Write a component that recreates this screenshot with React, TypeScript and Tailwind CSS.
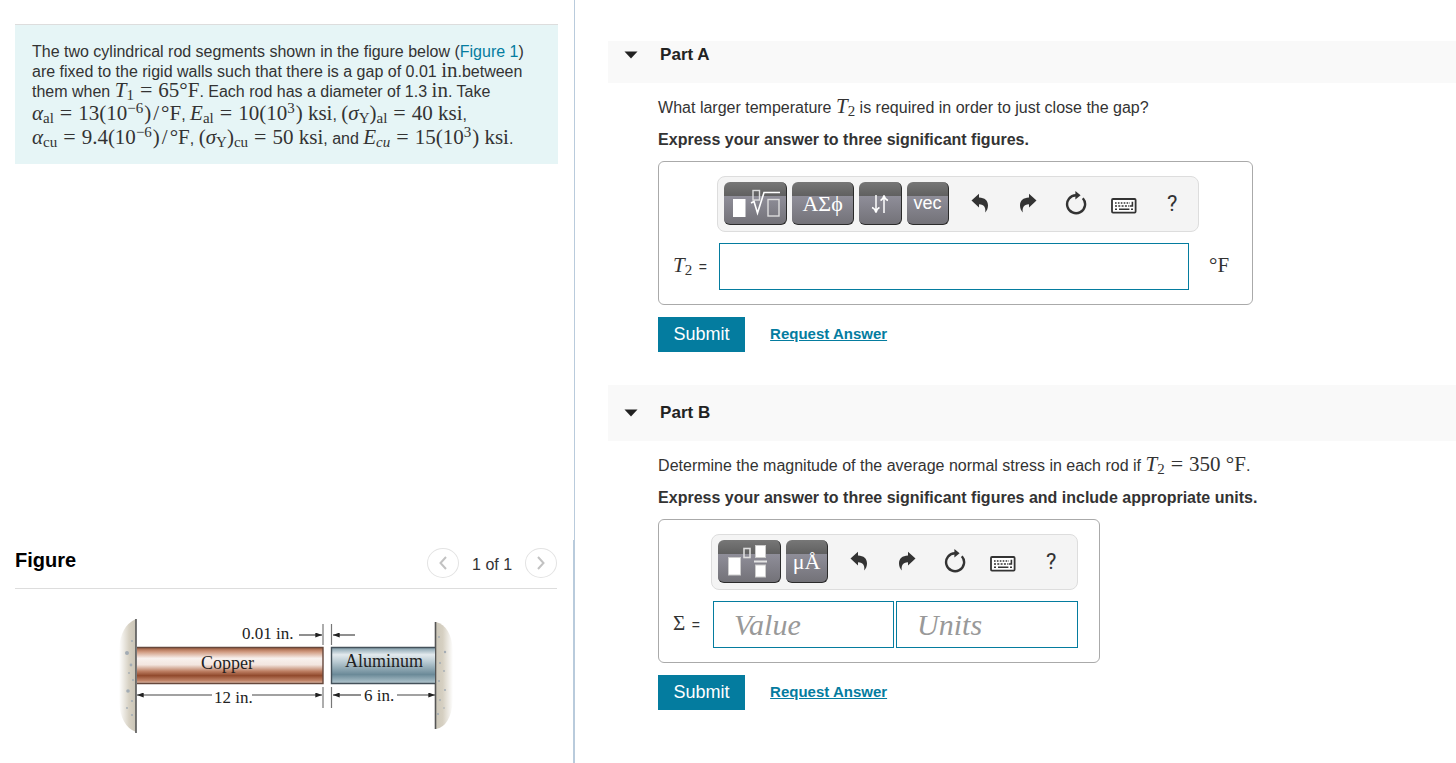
import type { ReactNode } from 'react'

const serif = "font-['Liberation_Serif','Times_New_Roman',serif]"

// Inline formula in the upright serif face
function M({ children }: { children: ReactNode }) {
  return (
    <span className="font-['Liberation_Serif','Times_New_Roman',serif] text-[21px] leading-0 whitespace-nowrap">
      {children}
    </span>
  )
}

function Sub({ children }: { children: ReactNode }) {
  return <sub className="-bottom-[3px] text-[15px]">{children}</sub>
}

function Sup({ children }: { children: ReactNode }) {
  return <sup className="mr-px text-[15px]">{children}</sup>
}

function Eq() {
  return <span className="mx-1.5 text-[22px] leading-0">=</span>
}

function Slash() {
  return <span className="mx-0.5">/</span>
}

function UndoIcon({ flip = false }: { flip?: boolean }) {
  return (
    <svg width="18" height="20" viewBox="0 0 18 20" className={flip ? '-scale-x-100' : ''} fill="#333">
      <path d="M0.5 7.5 L8 0.8 V4.6 C13.8 4.8 17 7.8 17 12.4 C17 15.4 15.8 17.6 14.2 19.4 C14.9 15 13.6 11.6 8 11.2 V14.4 Z" />
    </svg>
  )
}

function ResetIcon() {
  return (
    <svg width="22" height="24" viewBox="0 0 22 24">
      <path d="M11 4.2 A9 9 0 1 0 17.8 7.2" fill="none" stroke="#333" strokeWidth="2.4" />
      <path d="M10.4 0 L15.6 4.2 L10.4 8.6 Z" fill="#333" />
    </svg>
  )
}

function KeyboardIcon() {
  return (
    <svg width="26" height="16" viewBox="0 0 26 16">
      <rect x="1" y="1" width="23.6" height="13.6" rx="1" fill="#fff" stroke="#333" strokeWidth="1.8" />
      <path d="M4 5 H19" stroke="#333" strokeWidth="1.6" strokeDasharray="1.6 1.3" />
      <path d="M4 8 H18" stroke="#333" strokeWidth="1.6" strokeDasharray="2 1.3" />
      <path d="M21.4 3.8 V8 H18.6" fill="none" stroke="#333" strokeWidth="1.6" />
      <path d="M4 11.2 H6 M8 11.2 H18.4 M20 11.2 H22" stroke="#333" strokeWidth="1.6" />
    </svg>
  )
}

function RootIcon() {
  return (
    <svg width="50" height="30" viewBox="0 0 50 30" fill="none">
      <rect x="3" y="10" width="12.5" height="18" fill="#fff" />
      <rect x="23" y="1.5" width="6.5" height="9.5" stroke="#ddd" strokeWidth="1.4" />
      <path d="M21 14 L24 12.5 L27.5 24 L34 3.5 H50" stroke="#fff" strokeWidth="1.6" />
      <rect x="38" y="10.5" width="11" height="16.5" stroke="#ddd" strokeWidth="1.4" />
    </svg>
  )
}

function FractionIcon() {
  return (
    <svg width="44" height="34" viewBox="2 1 44 34" fill="none">
      <rect x="3.5" y="13.5" width="12" height="17.5" fill="#fff" stroke="#ccc" />
      <rect x="19" y="4.5" width="6" height="9" stroke="#ddd" strokeWidth="1.6" />
      <rect x="30.5" y="1.5" width="10" height="12" fill="#fff" stroke="#ccc" />
      <path d="M29 17.5 H42" stroke="#e5e5e5" strokeWidth="2" />
      <rect x="30.5" y="21" width="10" height="12" fill="#fff" stroke="#ccc" />
    </svg>
  )
}

function ArrowsIcon() {
  return (
    <svg width="18" height="20" viewBox="0 0 18 20" fill="none" stroke="#fff" strokeWidth="1.5">
      <path d="M5 1 V18 M1 13.5 Q4 14.5 5 18.5 Q6 14.5 8.5 13.5" />
      <path d="M13 19 V2 M9.5 6.5 Q12 5.5 13 1.5 Q14 5.5 17 6.5" />
    </svg>
  )
}

const darkBtn =
  'flex h-[43px] items-center justify-center rounded-md border-r border-b border-[#2b2b2b] bg-[linear-gradient(to_bottom,#777_0px,#606060_14px,#8f8e99_14px,#727177_43px)] pt-0.5 text-white'
const iconBtn = 'flex h-[43px] w-12 items-center justify-center text-[#333]'

function HistoryTools() {
  return (
    <div className="ml-0.5 flex">
      <button aria-label="undo" className={iconBtn}><UndoIcon /></button>
      <button aria-label="redo" className={iconBtn}><UndoIcon flip /></button>
      <button aria-label="reset" className={iconBtn}><ResetIcon /></button>
      <button aria-label="keyboard shortcuts" className={`${iconBtn} pt-1.5`}><KeyboardIcon /></button>
      <button aria-label="help" className={`${iconBtn} text-[22px] font-['Roboto',sans-serif]`}>?</button>
    </div>
  )
}

function Part({ title, first = false, children }: { title: string; first?: boolean; children: ReactNode }) {
  return (
    <section>
      <h2 className={`flex items-center bg-[#f9f9f9] pl-4 ${first ? 'pt-1 pb-[18px]' : 'py-[18px]'}`}>
        <button className="flex items-center text-[17px] leading-5 font-bold text-[#222]">
          <svg width="14" height="8" viewBox="0 0 14 8" className="mr-[22px]">
            <path d="M0.5 0.5 H13.5 L7 7.5 Z" fill="#222" />
          </svg>
          {title}
        </button>
      </h2>
      <div className="pt-[13px] pr-6 pb-[33px] pl-[50px]">{children}</div>
    </section>
  )
}

function Actions() {
  return (
    <div className="mt-3 flex items-center gap-[25px]">
      <button className="h-[35px] w-[87px] bg-[#047c9f] text-[18px] text-white">Submit</button>
      <a href="#request" className="text-[15px] font-bold text-[#047c9f] underline">Request Answer</a>
    </div>
  )
}

function RodFigure() {
  return (
    <svg width="340" height="126" viewBox="115 612 340 126" className="ml-[115px]" role="img" aria-label="Rods between rigid walls">
      <defs>
        <linearGradient id="copper" x1="0" y1="0" x2="0" y2="1">
          <stop offset="0" stopColor="#9c5a3c" />
          <stop offset="0.12" stopColor="#d09a80" />
          <stop offset="0.3" stopColor="#f8f1ee" />
          <stop offset="0.48" stopColor="#f3e6e0" />
          <stop offset="0.66" stopColor="#bd7f63" />
          <stop offset="0.78" stopColor="#914a2d" />
          <stop offset="0.92" stopColor="#c08468" />
          <stop offset="1" stopColor="#e3c2b2" />
        </linearGradient>
        <linearGradient id="aluminum" x1="0" y1="0" x2="0" y2="1">
          <stop offset="0" stopColor="#7f9ba8" />
          <stop offset="0.2" stopColor="#e3eaee" />
          <stop offset="0.4" stopColor="#b9cad2" />
          <stop offset="0.75" stopColor="#6b8a98" />
          <stop offset="1" stopColor="#b4c8d0" />
        </linearGradient>
        <linearGradient id="wallLeft">
          <stop offset="0" stopColor="#d6d0c2" stopOpacity="0" />
          <stop offset="0.6" stopColor="#d6d0c2" />
          <stop offset="1" stopColor="#c9c4b6" />
        </linearGradient>
        <linearGradient id="wallRight">
          <stop offset="0" stopColor="#cdc8ba" />
          <stop offset="0.4" stopColor="#d6d0c2" />
          <stop offset="1" stopColor="#d6d0c2" stopOpacity="0" />
        </linearGradient>
        <marker id="tip" viewBox="0 0 8 6" refX="8" refY="3" markerWidth="7" markerHeight="5" markerUnits="userSpaceOnUse" orient="auto-start-reverse">
          <path d="M0 0 L8 3 L0 6 Z" fill="#222" />
        </marker>
      </defs>

      {/* walls */}
      <path d="M136 619 Q120 626 119 650 V700 Q120 726 136 732 Z" fill="url(#wallLeft)" />
      <path d="M436 622 Q451 626 453 650 V700 Q451 726 436 729 Z" fill="url(#wallRight)" />
      <g fill="#a3acb4">
        <circle cx="127" cy="653" r="2" />
        <circle cx="132" cy="641" r="1" />
        <circle cx="131" cy="665" r="1.4" />
        <circle cx="128" cy="691" r="1.8" />
        <circle cx="133" cy="680" r="1" />
        <circle cx="129" cy="673" r="0.9" />
        <circle cx="132" cy="701" r="1.1" />
        <circle cx="127" cy="708" r="0.9" />
        <circle cx="132" cy="715" r="1.1" />
        <circle cx="439" cy="637" r="0.9" />
        <circle cx="445" cy="652" r="1.2" />
        <circle cx="440" cy="663" r="1" />
        <circle cx="444" cy="671" r="0.9" />
        <circle cx="439" cy="681" r="1" />
        <circle cx="445" cy="690" r="1" />
        <circle cx="440" cy="700" r="0.9" />
        <circle cx="438" cy="714" r="1.1" />
        <circle cx="444" cy="708" r="0.8" />
      </g>
      <path d="M136 619 V733" stroke="#555" strokeWidth="1.6" />
      <path d="M435.5 622 V729" stroke="#555" strokeWidth="1.6" />

      {/* rods */}
      <rect x="137" y="647.5" width="186" height="36" fill="url(#copper)" />
      <path d="M137 647.5 H323 V683.5 H137" fill="none" stroke="#66483c" strokeWidth="1.4" />
      <rect x="331.5" y="647.5" width="103.5" height="36" fill="url(#aluminum)" />
      <path d="M435 647.5 H331.5 V683.5 H435" fill="none" stroke="#44515a" strokeWidth="1.4" />

      {/* dimensions */}
      <g stroke="#444" strokeWidth="1.2" fill="none">
        <path d="M323 624 V645 M331.5 624 V645 M323 687 V708 M331.5 687 V708" stroke="#777" />
        <path d="M299 635 H322" markerEnd="url(#tip)" />
        <path d="M355 635 H333" markerEnd="url(#tip)" />
        <path d="M212 695 H137" markerEnd="url(#tip)" />
        <path d="M252 695 H322" markerEnd="url(#tip)" />
        <path d="M361 695 H333" markerEnd="url(#tip)" />
        <path d="M397 695 H435" markerEnd="url(#tip)" />
      </g>
      <g fill="#222" className={serif} fontSize="17">
        <text x="242" y="639">0.01 in.</text>
        <text x="214" y="703">12 in.</text>
        <text x="364" y="701">6 in.</text>
      </g>
      <g fill="#222" className={serif} fontSize="18">
        <text x="201" y="669">Copper</text>
        <text x="345" y="667">Aluminum</text>
      </g>
    </svg>
  )
}

function Pager() {
  const circle = 'flex h-[30px] w-8 items-center justify-center rounded-[50%] border border-[#e3e3e3]'
  return (
    <div className="flex items-center gap-[13px] text-[16px] text-[#333]">
      <button aria-label="previous" className={circle}>
        <svg width="8" height="14" viewBox="0 0 8 14" fill="none" stroke="#c2c2c2" strokeWidth="2">
          <path d="M7 1 L1.5 7 L7 13" />
        </svg>
      </button>
      <span className="pt-1">1 of 1</span>
      <button aria-label="next" className={circle}>
        <svg width="8" height="14" viewBox="0 0 8 14" fill="none" stroke="#c2c2c2" strokeWidth="2">
          <path d="M1 1 L6.5 7 L1 13" />
        </svg>
      </button>
    </div>
  )
}

const toolbar = 'flex h-14 items-center gap-[5px] rounded-lg border border-[#ddd] bg-[#f4f4f4] pb-0.5 pl-1.5'
const answerBox = 'mt-[9px] max-w-full rounded-md border border-[#aaa] py-3.5'
const field = 'h-[47px] border border-[#047c9f] bg-white outline-none'

export default function App() {
  return (
    <div className="flex min-h-screen bg-white font-['Liberation_Sans',Arial,sans-serif] text-[16px] text-[#333]">
      <aside className="flex w-[39.5%] shrink-0 flex-col">
        <div className="flex-1 border-r border-[#b9cbdc] pt-6 pr-4 pl-[15px]">
          <div className="border-t border-[#ddd] bg-[#e6f5f6] px-[17px] pt-[17px] pb-3.5 leading-5 whitespace-nowrap">
            <p className="h-5">
              The two cylindrical rod segments shown in the figure below (
              <a href="#figure" className="text-[#047c9f]">Figure 1</a>)
            </p>
            <p className="h-5">are fixed to the rigid walls such that there is a gap of 0.01 <M>in</M>.between</p>
            <p className="h-5">
              them when <M><i>T</i><Sub>1</Sub><Eq />65°F</M>. Each rod has a diameter of 1.3 <M>in</M>. Take
            </p>
            <p className="h-6 leading-[26px]">
              <M><i>α</i><Sub>al</Sub><Eq />13(10<Sup>−6</Sup>)<Slash />°F</M>,{' '}
              <M><i>E</i><Sub>al</Sub><Eq />10(10<Sup>3</Sup>) ksi</M>,{' '}
              <M>(<i>σ</i><Sub>Y</Sub>)<Sub>al</Sub><Eq />40 ksi</M>,
            </p>
            <p className="h-6 leading-[26px]">
              <M><i>α</i><Sub>cu</Sub><Eq />9.4(10<Sup>−6</Sup>)<Slash />°F</M>,{' '}
              <M>(<i>σ</i><Sub>Y</Sub>)<Sub>cu</Sub><Eq />50 ksi</M>, and{' '}
              <M><i>E</i><Sub><i>cu</i></Sub><Eq />15(10<Sup>3</Sup>) ksi</M>.
            </p>
          </div>
        </div>
        <div id="figure" className="h-[223px] border-r-2 border-[#b9cbdc] pt-2 pr-4 pl-[15px]">
          <div className="flex items-start justify-between border-b border-[#ddd] pb-2.5">
            <h2 className="text-[20px] leading-6 font-bold text-black">Figure</h2>
            <Pager />
          </div>
          <div className="-ml-[15px] pt-[23px]">
            <RodFigure />
          </div>
        </div>
      </aside>

      <main className="min-w-0 flex-1 pt-[41px] pl-[33px]">
        <Part title="Part A" first>
          <p className="h-6 leading-6">
            What larger temperature <M><i>T</i><Sub>2</Sub></M> is required in order to just close the gap?
          </p>
          <p className="mt-2 leading-6 font-bold">Express your answer to three significant figures.</p>
          <div className={`${answerBox} w-[595px]`}>
            <div className={`${toolbar} ml-[58px] w-[482px]`}>
              <button aria-label="templates" className={`${darkBtn} w-[63px]`}><RootIcon /></button>
              <button className={`${darkBtn} ${serif} w-[62px] text-[22px]`}>ΑΣϕ</button>
              <button aria-label="arrows" className={`${darkBtn} w-[43px]`}><ArrowsIcon /></button>
              <button className={`${darkBtn} w-[42px] text-[18px]`}>vec</button>
              <HistoryTools />
            </div>
            <div className="mt-[11px] flex items-center">
              <label htmlFor="t2" className="w-[60px] pl-[14px]">
                <M><i>T</i><Sub>2</Sub></M> <span className="ml-0.5 text-[14px]">=</span>
              </label>
              <input id="t2" type="text" className={`${field} w-[470px] px-5`} />
              <span className="ml-5"><M>°F</M></span>
            </div>
          </div>
          <Actions />
        </Part>

        <Part title="Part B">
          <p className="h-6 leading-6">
            Determine the magnitude of the average normal stress in each rod if{' '}
            <M><i>T</i><Sub>2</Sub><Eq />350 °F</M>.
          </p>
          <p className="mt-2 leading-6 font-bold">
            Express your answer to three significant figures and include appropriate units.
          </p>
          <div className={`${answerBox} w-[442px]`}>
            <div className={`${toolbar} ml-[52px] w-[367px]`}>
              <button aria-label="templates" className={`${darkBtn} w-[63px]`}><FractionIcon /></button>
              <button className={`${darkBtn} ${serif} w-[42px] text-[22px]`}>μÅ</button>
              <HistoryTools />
            </div>
            <div className="mt-[11px] flex items-center">
              <label htmlFor="value" className="w-[54px] pl-[14px]">
                <M>Σ</M> <span className="ml-0.5 text-[14px]">=</span>
              </label>
              <input
                id="value"
                type="text"
                placeholder="Value"
                className={`${field} ${serif} w-[181px] px-5 text-[30px] italic placeholder:text-[#999]`}
              />
              <input
                type="text"
                aria-label="Units"
                placeholder="Units"
                className={`${field} ${serif} ml-0.5 w-[182px] px-5 text-[30px] italic placeholder:text-[#999]`}
              />
            </div>
          </div>
          <Actions />
        </Part>
      </main>
    </div>
  )
}
